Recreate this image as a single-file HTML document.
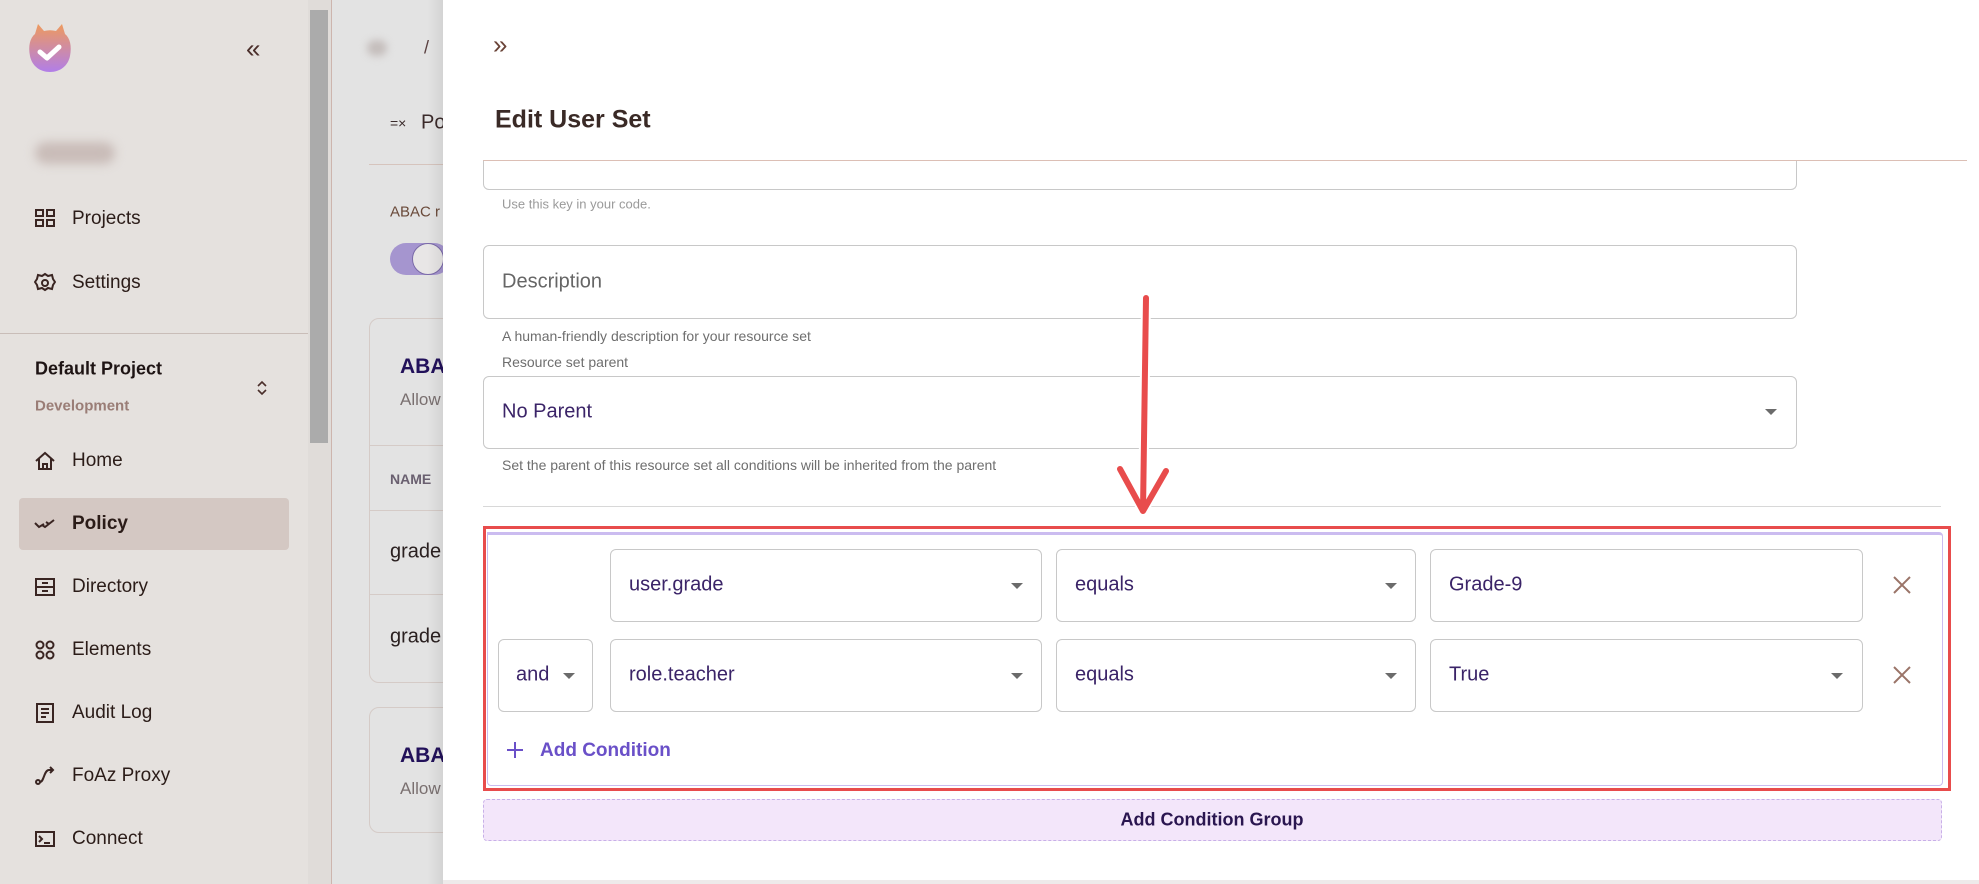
<!DOCTYPE html>
<html><head><meta charset="utf-8"><style>
*{box-sizing:border-box;margin:0;padding:0}
body{width:1979px;height:884px;overflow:hidden;position:relative;font-family:"Liberation Sans",sans-serif;background:#e4e3e2}
.abs{position:absolute}
#side{left:0;top:0;width:308px;height:884px;background:#e5e1de}
.nav{position:absolute;left:72px;font-size:19px;color:#2b1c18;transform:translateY(-50%)}
.ico{position:absolute;left:34px;width:22px;height:22px;transform:translateY(-50%)}
#scroll{left:308px;top:0;width:23px;height:884px;background:#e0dcd9}
#main{left:331px;top:0;width:113px;height:884px;background:#e3e3e3;border-left:1px solid #cdb5ae}
#drawer{left:443px;top:0;width:1536px;height:884px;background:#fff}
.box{position:absolute;border:1.5px solid #c8c8c8;border-radius:6px;background:#fff}
.txt{position:absolute;transform:translateY(-50%);white-space:nowrap}
.help{font-size:14px;color:#8a8a8a}
.val{font-size:20px;color:#3b2468}
.caret{position:absolute;width:0;height:0;border-left:6px solid transparent;border-right:6px solid transparent;border-top:6px solid #6b6b6b}
</style></head><body>
<div id="side" class="abs">
 <svg class="abs" style="left:24px;top:20px" width="52" height="56" viewBox="0 0 52 56"><defs><linearGradient id="g" x1="0" y1="0" x2="0" y2="1"><stop offset="0" stop-color="#ee9a5e"/><stop offset="1" stop-color="#b17ee8"/></linearGradient></defs><path d="M6 36 C4 26 6 18 11 14 L14 4 L20 11 C24 10 28 10 32 11 L38 4 L41 14 C46 18 48 26 46 36 C44 46 36 52 26 52 C16 52 8 46 6 36Z" fill="url(#g)"/><path d="M16 32 L23 38 L35 27" stroke="#fff" stroke-width="5" fill="none" stroke-linecap="round" stroke-linejoin="round"/></svg>
 <div class="txt" style="left:246px;top:49px;font-size:26px;color:#4a2e2a">«</div>
 <div class="abs" style="left:35px;top:142px;width:80px;height:22px;border-radius:11px;background:#c9bcb8;filter:blur(5px)"></div>
 <svg class="ico" style="top:218px" viewBox="0 0 22 22" fill="none" stroke="#3a2522" stroke-width="2"><rect x="2" y="3" width="7" height="6"/><rect x="13" y="3" width="7" height="6"/><rect x="2" y="13" width="7" height="6"/><rect x="13" y="13" width="7" height="6"/></svg>
 <div class="nav" style="top:219px">Projects</div>
 <svg class="ico" style="top:283px" viewBox="0 0 22 22" fill="none" stroke="#3a2522" stroke-width="2"><path d="M11 2l3 2 4-1 1 4 2 3-2 3-1 4-4-1-3 2-3-2-4 1-1-4-2-3 2-3 1-4 4 1z"/><circle cx="11" cy="11" r="3"/></svg>
 <div class="nav" style="top:283px">Settings</div>
 <div class="abs" style="left:0;top:333px;width:308px;height:1px;background:#c9bdb8"></div>
 <div class="nav" style="left:35px;top:369px;font-weight:bold;font-size:18px;color:#1e1414">Default Project</div>
 <div class="nav" style="left:35px;top:406px;font-weight:bold;font-size:15px;color:#9a7d76">Development</div>
 <svg class="abs" style="left:255px;top:379px" width="14" height="18" viewBox="0 0 14 18" fill="none" stroke="#4a2e2a" stroke-width="1.6"><path d="M3 7l4-4 4 4M3 11l4 4 4-4"/></svg>
 <svg class="ico" style="top:461px" viewBox="0 0 22 22" fill="none" stroke="#3a2522" stroke-width="2"><path d="M2 11L11 3l9 8M5 9v10h12V9M9 19v-5h4v5"/></svg>
 <div class="nav" style="top:461px">Home</div>
 <div class="abs" style="left:19px;top:498px;width:270px;height:52px;border-radius:4px;background:#d4c8c3"></div>
 <svg class="ico" style="top:524px" viewBox="0 0 22 22" fill="none" stroke="#3a2522" stroke-width="2"><path d="M1 10l4 4 5-3M8 12l3 2 9-7M12 9l3 2"/></svg>
 <div class="nav" style="top:524px;font-weight:bold">Policy</div>
 <svg class="ico" style="top:587px" viewBox="0 0 22 22" fill="none" stroke="#3a2522" stroke-width="2"><rect x="2" y="3" width="18" height="16"/><path d="M2 11h18M8 7h6M8 15h6"/></svg>
 <div class="nav" style="top:587px">Directory</div>
 <svg class="ico" style="top:650px" viewBox="0 0 22 22" fill="none" stroke="#3a2522" stroke-width="2"><circle cx="6" cy="6" r="3.5"/><circle cx="16" cy="6" r="3.5"/><circle cx="6" cy="16" r="3.5"/><circle cx="16" cy="16" r="3.5"/></svg>
 <div class="nav" style="top:650px">Elements</div>
 <svg class="ico" style="top:713px" viewBox="0 0 22 22" fill="none" stroke="#3a2522" stroke-width="2"><rect x="3" y="2" width="16" height="18"/><path d="M7 7h8M7 11h8M7 15h5"/></svg>
 <div class="nav" style="top:713px">Audit Log</div>
 <svg class="ico" style="top:776px" viewBox="0 0 22 22" fill="none" stroke="#3a2522" stroke-width="2"><circle cx="4" cy="17" r="2"/><path d="M6 17c4 0 4-12 9-12h4M16 2l3 3-3 3"/></svg>
 <div class="nav" style="top:776px">FoAz Proxy</div>
 <svg class="ico" style="top:839px" viewBox="0 0 22 22" fill="none" stroke="#3a2522" stroke-width="2"><rect x="2" y="4" width="18" height="14"/><path d="M5 8l3 3-3 3M10 15h6"/></svg>
 <div class="nav" style="top:839px">Connect</div>
</div>
<div id="scroll" class="abs"><div class="abs" style="left:2px;top:10px;width:18px;height:433px;background:#ababab"></div></div>
<div id="main" class="abs">
 <div class="abs" style="left:35px;top:40px;width:20px;height:16px;border-radius:8px;background:#c4bdbb;filter:blur(4px)"></div>
 <div class="txt" style="left:92px;top:48px;font-size:18px;color:#5a4040">/</div>
 <div class="txt" style="left:58px;top:123px;font-size:14px;color:#3a2a2a">=×</div>
 <div class="txt" style="left:89px;top:123px;font-size:20px;color:#3a2a2a">Po</div>
 <div class="abs" style="left:37px;top:164px;width:80px;height:1px;background:#d6c4bd"></div>
 <div class="txt" style="left:58px;top:212px;font-size:15px;color:#6a4a3a">ABAC r</div>
 <div class="abs" style="left:58px;top:243px;width:60px;height:32px;border-radius:16px;background:#a595cf"></div>
 <div class="abs" style="left:80px;top:243px;width:32px;height:32px;border-radius:16px;background:#e8e6e6;border:1.5px solid #7a6aa8"></div>
 <div class="abs" style="left:37px;top:318px;width:90px;height:365px;border:1px solid #d5cbc7;border-radius:10px"></div>
 <div class="txt" style="left:68px;top:367px;font-size:21px;font-weight:bold;color:#22115a">ABA</div>
 <div class="txt" style="left:68px;top:400px;font-size:17px;color:#7a7070">Allow</div>
 <div class="abs" style="left:37px;top:445px;width:80px;height:1px;background:#d5cbc7"></div>
 <div class="txt" style="left:58px;top:479px;font-size:14px;font-weight:bold;color:#6a6070">NAME</div>
 <div class="abs" style="left:37px;top:510px;width:80px;height:1px;background:#d5cbc7"></div>
 <div class="txt" style="left:58px;top:552px;font-size:20px;color:#2a2020">grade</div>
 <div class="abs" style="left:37px;top:594px;width:80px;height:1px;background:#d5cbc7"></div>
 <div class="txt" style="left:58px;top:637px;font-size:20px;color:#2a2020">grade</div>
 <div class="abs" style="left:37px;top:707px;width:90px;height:126px;border:1px solid #d5cbc7;border-radius:10px"></div>
 <div class="txt" style="left:68px;top:756px;font-size:21px;font-weight:bold;color:#22115a">ABA</div>
 <div class="txt" style="left:68px;top:789px;font-size:17px;color:#7a7070">Allow</div>
 <div class="abs" style="left:95px;top:0;width:18px;height:884px;background:linear-gradient(90deg,rgba(0,0,0,0),rgba(0,0,0,0.08))"></div>
</div>
<div id="drawer" class="abs">
 <div class="txt" style="left:50px;top:45px;font-size:26px;color:#6a4438">»</div>
 <div class="txt" style="left:52px;top:120px;font-size:25px;font-weight:bold;color:#3a2a26">Edit User Set</div>
 <div class="box" style="left:40px;top:161px;width:1314px;height:29px;border-top:none;border-radius:0 0 6px 6px"></div>
 <div class="abs" style="left:40px;top:160px;width:1484px;height:1px;background:#dcbfb5"></div>
 <div class="txt help" style="left:59px;top:204px;font-size:13px;color:#9a9a9a">Use this key in your code.</div>
 <div class="box" style="left:40px;top:245px;width:1314px;height:74px"></div>
 <div class="txt" style="left:59px;top:282px;font-size:20px;color:#666">Description</div>
 <div class="txt help" style="left:59px;top:336px;color:#6e6e6e">A human-friendly description for your resource set</div>
 <div class="txt help" style="left:59px;top:362px;color:#6e6e6e">Resource set parent</div>
 <div class="box" style="left:40px;top:376px;width:1314px;height:73px"></div>
 <div class="txt val" style="left:59px;top:412px">No Parent</div>
 <div class="caret" style="left:1322px;top:409px"></div>
 <div class="txt help" style="left:59px;top:465px;color:#6e6e6e">Set the parent of this resource set all conditions will be inherited from the parent</div>
 <div class="abs" style="left:40px;top:506px;width:1458px;height:1px;background:#d8d8d8"></div>
 <div class="abs" style="left:40px;top:526px;width:1468px;height:265px;border:3.5px solid #e84c4c"></div>
 <div class="abs" style="left:44px;top:532px;width:1456px;height:254px;border:1px solid #cbbcf0;border-top:3px solid #cbbcf0;border-radius:0 4px 4px 4px"></div>
 <div class="box" style="left:167px;top:549px;width:432px;height:73px"></div>
 <div class="txt val" style="left:186px;top:585px">user.grade</div><div class="caret" style="left:568px;top:583px"></div>
 <div class="box" style="left:613px;top:549px;width:360px;height:73px"></div>
 <div class="txt val" style="left:632px;top:585px">equals</div><div class="caret" style="left:942px;top:583px"></div>
 <div class="box" style="left:987px;top:549px;width:433px;height:73px"></div>
 <div class="txt val" style="left:1006px;top:585px">Grade-9</div>
 <div class="box" style="left:55px;top:639px;width:95px;height:73px"></div>
 <div class="txt val" style="left:73px;top:675px">and</div><div class="caret" style="left:120px;top:673px"></div>
 <div class="box" style="left:167px;top:639px;width:432px;height:73px"></div>
 <div class="txt val" style="left:186px;top:675px">role.teacher</div><div class="caret" style="left:568px;top:673px"></div>
 <div class="box" style="left:613px;top:639px;width:360px;height:73px"></div>
 <div class="txt val" style="left:632px;top:675px">equals</div><div class="caret" style="left:942px;top:673px"></div>
 <div class="box" style="left:987px;top:639px;width:433px;height:73px"></div>
 <div class="txt val" style="left:1006px;top:675px">True</div><div class="caret" style="left:1388px;top:673px"></div>
 <svg class="abs" style="left:1449px;top:575px" width="20" height="20" viewBox="0 0 20 20" stroke="#9a7468" stroke-width="2"><path d="M2 2L18 18M18 2L2 18"/></svg>
 <svg class="abs" style="left:1449px;top:665px" width="20" height="20" viewBox="0 0 20 20" stroke="#9a7468" stroke-width="2"><path d="M2 2L18 18M18 2L2 18"/></svg>
 <svg class="abs" style="left:64px;top:742px" width="16" height="16" viewBox="0 0 16 16" stroke="#6a50c8" stroke-width="2"><path d="M8 0v16M0 8h16"/></svg>
 <div class="txt" style="left:97px;top:751px;font-size:19px;font-weight:bold;color:#6a50c8">Add Condition</div>
 <div class="abs" style="left:40px;top:799px;width:1459px;height:42px;background:#f3e6fa;border:1px dashed #c8b0e8;border-radius:4px"></div>
 <div class="txt" style="left:769px;top:820px;transform:translate(-50%,-50%);font-size:18px;font-weight:bold;color:#2a1650">Add Condition Group</div>
 <div class="abs" style="left:0;top:880px;width:1536px;height:4px;background:#eeeaea"></div>
 <svg class="abs" style="left:660px;top:290px" width="70" height="232" viewBox="660 290 70 232"><path d="M703 298L700 511M677 469L700 511L723 471" stroke="#fff" stroke-width="10" fill="none" stroke-linecap="round" stroke-linejoin="round"/><path d="M703 298L700 511M677 469L700 511L723 471" stroke="#e84c4c" stroke-width="6" fill="none" stroke-linecap="round" stroke-linejoin="round"/></svg>
</div>
</body></html>
